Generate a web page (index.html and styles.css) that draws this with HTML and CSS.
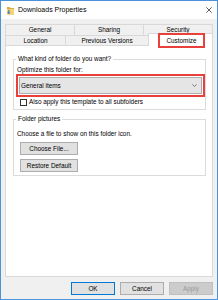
FILE: index.html
```html
<!DOCTYPE html>
<html lang="en">
<head>
<meta charset="utf-8">
<title>Downloads Properties</title>
<link rel="stylesheet" href="styles.css">
</head>
<body>
<div class="window">
  <div class="titlebar">
    <svg class="ficon" width="7" height="9" viewBox="0 0 7 9">
      <path d="M0 1h2.6l1 1H7v6.5H0z" fill="#dfa93f"/>
      <rect x="0" y="3" width="7" height="5.5" fill="#f7d372"/>
      <path d="M1.8 3.8v3.6M0.6 6.2l1.2 1.3 1.2-1.3" stroke="#1f74d4" stroke-width="1" fill="none"/>
    </svg>
    <span class="title">Downloads Properties</span>
    <svg class="close" width="6" height="6" viewBox="0 0 6 6">
      <path d="M0.3 0.3L5.7 5.7M5.7 0.3L0.3 5.7" stroke="#333" stroke-width="0.8" fill="none"/>
    </svg>
  </div>
  <div class="body">
    <div class="tabrow row1">
      <div class="tab w69">General</div>
      <div class="tab w69">Sharing</div>
      <div class="tab w70 last">Security</div>
    </div>
    <div class="tabrow row2">
      <div class="tab w60">Location</div>
      <div class="tab w83">Previous Versions</div>
      <div class="tab w65 last selected"><span class="mark">Customize</span></div>
    </div>
    <div class="panel">
      <fieldset class="group g1">
        <legend>What kind of folder do you want?</legend>
        <div class="line">Optimize this folder for:</div>
        <div class="hl">
          <div class="combo">
            <span>General items</span>
            <svg class="chev" width="5" height="3" viewBox="0 0 5 3">
              <path d="M0.4 0.4L2.5 2.5L4.6 0.4" stroke="#606060" stroke-width="0.8" fill="none"/>
            </svg>
          </div>
        </div>
        <div class="check"><span class="box"></span><span>Also apply this template to all subfolders</span></div>
      </fieldset>
      <fieldset class="group g2">
        <legend>Folder pictures</legend>
        <div class="line l2">Choose a file to show on this folder icon.</div>
        <div class="btn sm first">Choose File...</div>
        <div class="btn sm">Restore Default</div>
      </fieldset>
    </div>
    <div class="actions">
      <div class="btn act default">OK</div>
      <div class="btn act">Cancel</div>
      <div class="btn act disabled">Apply</div>
    </div>
  </div>
</div>
</body>
</html>
```

FILE: styles.css
```css
* { box-sizing: border-box; }
html, body { margin: 0; padding: 0; }
body {
  width: 218px;
  height: 300px;
  background: #fff;
  font-family: "Liberation Sans", Arial, sans-serif;
  font-size: 6.4px;
  color: #000;
}
.window {
  width: 218px;
  height: 300px;
  border: 1px solid #4a93dc;
  display: flex;
  flex-direction: column;
  background: #f0f0f0;
}
.titlebar {
  height: 18px;
  background: #fff;
  display: flex;
  align-items: center;
  padding: 0 5px 0 6px;
}
.ficon { display: block; }
.title { margin-left: 4px; font-size: 7px; line-height: 8px; }
.close { margin-left: auto; display: block; }
.body {
  flex: 1;
  padding: 5px 4px 0 4px;
  display: flex;
  flex-direction: column;
}
.tabrow { display: flex; }
.row1 { height: 11px; }
.row2 { height: 10px; }
.tab {
  border: 1px solid #d9d9d9;
  border-right: none;
  border-bottom: none;
  display: flex;
  align-items: center;
  justify-content: center;
  background: #f0f0f0;
  line-height: 8px;
  white-space: nowrap;
}
.tab.last { border-right: 1px solid #d9d9d9; }
.w69 { width: 69px; }
.w70 { width: 70px; }
.w60 { width: 60px; }
.w83 { width: 83px; }
.w65 { width: 65px; }
.tab.selected {
  height: 13px;
  margin-top: -2px;
  align-self: flex-start;
  background: #fff;
  position: relative;
  z-index: 1;
  align-items: flex-start;
  justify-content: flex-start;
  padding-left: 9px;
}
.mark {
  display: block;
  width: 47px;
  height: 15px;
  margin-top: -1px;
  border: 2px solid #e8413c;
  line-height: 11px;
  text-align: center;
}
.panel {
  height: 232px;
  border: 1px solid #d9d9d9;
  background: #fff;
  padding: 0 6px 0 7px;
  display: flex;
  flex-direction: column;
}
.group {
  margin: 0;
  padding: 0 0 3px 0;
  border: 1px solid #dcdcdc;
  min-width: 0;
}
.group legend {
  padding: 0 2px;
  margin-left: 2px;
  height: 8px;
  line-height: 8px;
}
.g1 { margin-top: 9px; }
.g2 { margin-top: 5px; }
.line {
  height: 8px;
  line-height: 8px;
  padding-left: 3px;
  margin-top: 3px;
}
.line.l2 { margin-top: 7px; }
.hl {
  margin-left: 2px;
  border: 2px solid #e8413c;
  padding: 1px;
  height: 23px;
}
.combo {
  height: 17px;
  background: #e5e5e5;
  border: 1px solid #adadad;
  display: flex;
  align-items: center;
  justify-content: space-between;
  padding: 0 4px 0 1px;
  line-height: 8px;
}
.chev { display: block; }
.check {
  display: flex;
  align-items: center;
  height: 8px;
  margin-top: 1px;
  margin-left: 6px;
  line-height: 8px;
}
.box {
  width: 7px;
  height: 7px;
  border: 1px solid #333;
  background: #fff;
  margin-right: 2px;
}
.btn {
  height: 13px;
  border: 1px solid #adadad;
  background: #e1e1e1;
  display: flex;
  align-items: center;
  justify-content: center;
  line-height: 8px;
  white-space: nowrap;
}
.btn.sm {
  width: 58px;
  margin-left: 6px;
  margin-top: 4px;
}
.actions {
  display: flex;
  justify-content: flex-end;
  gap: 5px;
  margin-top: 5px;
}
.btn.act { width: 44px; }
.btn.default { border-color: #0078d7; }
.btn.disabled {
  background: #cccccc;
  border-color: #bfbfbf;
  color: #9a9a9a;
}
```
